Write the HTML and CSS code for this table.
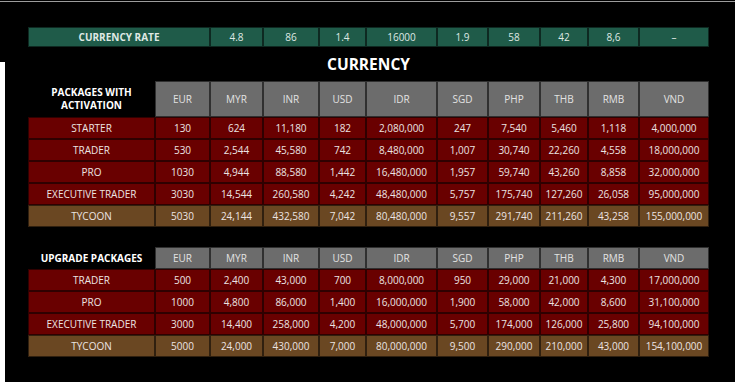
FILE: index.html
```html
<!DOCTYPE html>
<html lang="en">
<head>
<meta charset="utf-8">
<title>Currency</title>
<link rel="stylesheet" href="styles.css">
</head>
<body>
<div class="frame">
  <div class="sheet">
    <table class="grid">
      <colgroup>
        <col class="c-label"><col class="c-eur"><col class="c-myr"><col class="c-inr"><col class="c-usd"><col class="c-idr"><col class="c-sgd"><col class="c-php"><col class="c-thb"><col class="c-rmb"><col class="c-vnd">
      </colgroup>
      <tr class="rate">
        <th colspan="2">CURRENCY RATE</th>
        <td>4.8</td><td>86</td><td>1.4</td><td>16000</td><td>1.9</td><td>58</td><td>42</td><td>8,6</td><td>–</td>
      </tr>
    </table>

    <h1 class="title">CURRENCY</h1>

    <table class="grid">
      <colgroup>
        <col class="c-label"><col class="c-eur"><col class="c-myr"><col class="c-inr"><col class="c-usd"><col class="c-idr"><col class="c-sgd"><col class="c-php"><col class="c-thb"><col class="c-rmb"><col class="c-vnd">
      </colgroup>
      <tr class="head tall">
        <th class="label">PACKAGES WITH<br>ACTIVATION</th>
        <td>EUR</td><td>MYR</td><td>INR</td><td>USD</td><td>IDR</td><td>SGD</td><td>PHP</td><td>THB</td><td>RMB</td><td>VND</td>
      </tr>
      <tr class="red"><td>STARTER</td><td>130</td><td>624</td><td>11,180</td><td>182</td><td>2,080,000</td><td>247</td><td>7,540</td><td>5,460</td><td>1,118</td><td>4,000,000</td></tr>
      <tr class="red"><td>TRADER</td><td>530</td><td>2,544</td><td>45,580</td><td>742</td><td>8,480,000</td><td>1,007</td><td>30,740</td><td>22,260</td><td>4,558</td><td>18,000,000</td></tr>
      <tr class="red"><td>PRO</td><td>1030</td><td>4,944</td><td>88,580</td><td>1,442</td><td>16,480,000</td><td>1,957</td><td>59,740</td><td>43,260</td><td>8,858</td><td>32,000,000</td></tr>
      <tr class="red"><td>EXECUTIVE TRADER</td><td>3030</td><td>14,544</td><td>260,580</td><td>4,242</td><td>48,480,000</td><td>5,757</td><td>175,740</td><td>127,260</td><td>26,058</td><td>95,000,000</td></tr>
      <tr class="gold"><td>TYCOON</td><td>5030</td><td>24,144</td><td>432,580</td><td>7,042</td><td>80,480,000</td><td>9,557</td><td>291,740</td><td>211,260</td><td>43,258</td><td>155,000,000</td></tr>
    </table>

    <table class="grid upgrade">
      <colgroup>
        <col class="c-label"><col class="c-eur"><col class="c-myr"><col class="c-inr"><col class="c-usd"><col class="c-idr"><col class="c-sgd"><col class="c-php"><col class="c-thb"><col class="c-rmb"><col class="c-vnd">
      </colgroup>
      <tr class="head">
        <th class="label">UPGRADE PACKAGES</th>
        <td>EUR</td><td>MYR</td><td>INR</td><td>USD</td><td>IDR</td><td>SGD</td><td>PHP</td><td>THB</td><td>RMB</td><td>VND</td>
      </tr>
      <tr class="red"><td>TRADER</td><td>500</td><td>2,400</td><td>43,000</td><td>700</td><td>8,000,000</td><td>950</td><td>29,000</td><td>21,000</td><td>4,300</td><td>17,000,000</td></tr>
      <tr class="red"><td>PRO</td><td>1000</td><td>4,800</td><td>86,000</td><td>1,400</td><td>16,000,000</td><td>1,900</td><td>58,000</td><td>42,000</td><td>8,600</td><td>31,100,000</td></tr>
      <tr class="red"><td>EXECUTIVE TRADER</td><td>3000</td><td>14,400</td><td>258,000</td><td>4,200</td><td>48,000,000</td><td>5,700</td><td>174,000</td><td>126,000</td><td>25,800</td><td>94,100,000</td></tr>
      <tr class="gold"><td>TYCOON</td><td>5000</td><td>24,000</td><td>430,000</td><td>7,000</td><td>80,000,000</td><td>9,500</td><td>290,000</td><td>210,000</td><td>43,000</td><td>154,100,000</td></tr>
    </table>
  </div>
</div>
</body>
</html>
```

FILE: styles.css
```css
html, body {
  margin: 0;
  padding: 0;
  background: #000;
}

body {
  font-family: "Open Sans", "DejaVu Sans", sans-serif;
  color: #ece4e2;
  height: 382px;
  overflow: hidden;
}

.frame {
  position: relative;
  margin-top: 1px;
  border-top: 1px solid #9c9c9c;
  height: 380px;
}

.frame::before {
  content: "";
  position: absolute;
  left: 0;
  top: 60px;
  bottom: 0;
  width: 5px;
  background: #ffffff;
}

.sheet {
  padding: 25px 0 0 28px;
}

.grid {
  table-layout: fixed;
  width: 681px;
  border-collapse: separate;
  border-spacing: 0;
  font-size: 10px;
  text-align: center;
}

.c-label { width: 127px; }
.c-eur { width: 55px; }
.c-myr { width: 53px; }
.c-inr { width: 56px; }
.c-usd { width: 47px; }
.c-idr { width: 71px; }
.c-sgd { width: 51px; }
.c-php { width: 52px; }
.c-thb { width: 48px; }
.c-rmb { width: 51px; }
.c-vnd { width: 70px; }

.grid td,
.grid th {
  padding: 0;
  height: 20px;
  border: 1px solid rgba(0, 0, 0, 0.55);
  white-space: nowrap;
  line-height: 13px;
}

.grid th {
  font-weight: 700;
  color: #f2f2f2;
}

.rate th,
.rate td {
  height: 18px;
  background: #1f5b49;
  color: #dfe9e4;
}

.head td {
  background: #6c6c6c;
  color: #e2e2e2;
}

.head .label {
  background: transparent;
  border-color: transparent;
  color: #fff;
}

.tall td,
.tall th {
  height: 34px;
}

.red td {
  background: #690000;
}

.gold td {
  background: #6a4722;
}

.title {
  margin: 0;
  height: 34px;
  line-height: 34px;
  width: 681px;
  text-align: center;
  font-size: 15.5px;
  font-weight: 700;
  color: #fff;
}

.upgrade {
  margin-top: 20px;
}
```
